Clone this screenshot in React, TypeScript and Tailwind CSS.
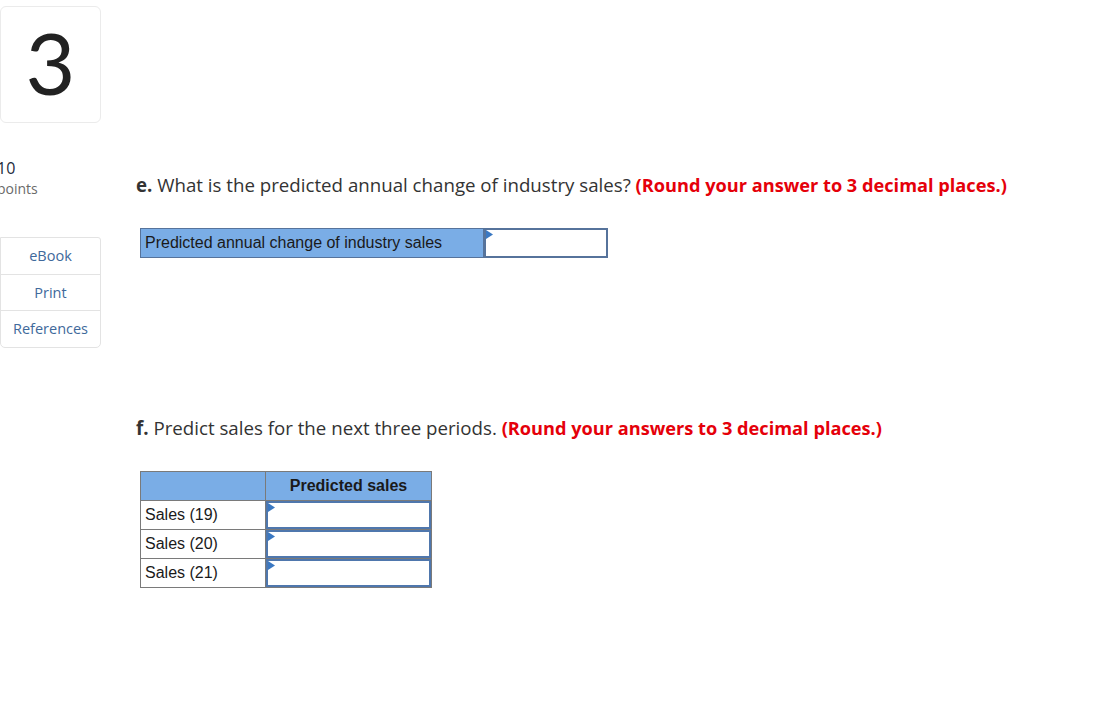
import type { ReactNode } from "react";

const sans = "font-['Open_Sans','Lato',sans-serif]";
const arial = "font-['Liberation_Sans',Arial,sans-serif]";

function Marker() {
  return (
    <svg
      className="absolute left-0 top-0"
      width="7"
      height="9"
      viewBox="0 0 7 9"
    >
      <polygon points="0,0 7,4.5 0,9" fill="#3a78c2" />
    </svg>
  );
}

function AnswerBox({ className }: { className: string }) {
  return (
    <div className={`relative border-2 bg-white ${className}`}>
      <Marker />
    </div>
  );
}

function SideButton({
  children,
  className = "",
}: {
  children: ReactNode;
  className?: string;
}) {
  return (
    <div
      className={`flex items-center justify-center border border-[#e3e3e3] text-[14.5px] text-[#40699b] ${className}`}
    >
      {children}
    </div>
  );
}

export default function App() {
  return (
    <div
      className={`flex h-[716px] w-[1110px] overflow-hidden bg-white ${sans}`}
    >
      {/* Sidebar */}
      <div className="flex w-[101px] shrink-0 flex-col">
        <div className="mt-[6px] flex h-[117px] w-[101px] items-center justify-center rounded-[6px] border border-[#ebebeb]">
          <span className="-mt-[6px] font-['Lato',sans-serif] text-[86px] font-normal leading-none text-[#222]">
            3
          </span>
        </div>
        <div className="-ml-[3px] mt-[35px] text-[16px] leading-[20px] text-[#1d2b3c]">
          10
        </div>
        <div className="-ml-[3px] mt-[2px] text-[14px] leading-[18px] text-[#6a6a6a]">
          points
        </div>
        <div className="mt-[39px] flex flex-col">
          <SideButton className="h-[38px] rounded-tr-[3px]">eBook</SideButton>
          <SideButton className="-mt-px h-[37px]">Print</SideButton>
          <SideButton className="-mt-px h-[38px] rounded-b-[5px]">
            References
          </SideButton>
        </div>
      </div>

      {/* Main */}
      <div className="flex flex-col pl-[35px]">
        <p className="mt-[173px] whitespace-nowrap text-[18.7px] leading-[24px] text-[#333]">
          <span className="font-bold">e.</span> What is the predicted annual
          change of industry sales?{" "}
          <span className="text-[18.2px] font-bold text-[#e5000a]">
            (Round your answer to 3 decimal places.)
          </span>
        </p>

        <div className={`ml-[4px] mt-[31px] flex h-[30px] ${arial}`}>
          <div className="flex w-[344px] items-center border border-[#56739b] bg-[#7aade6] pl-[4px] text-[16px] text-[#1a1a1a]">
            Predicted annual change of industry sales
          </div>
          <AnswerBox className="w-[124px] border-[#56739b]" />
        </div>

        <p className="mt-[158px] whitespace-nowrap text-[18.7px] leading-[24px] text-[#333]">
          <span className="font-bold">f.</span> Predict sales for the next three
          periods.{" "}
          <span className="text-[18.2px] font-bold text-[#e5000a]">
            (Round your answers to 3 decimal places.)
          </span>
        </p>

        <div className={`ml-[4px] mt-[31px] w-[292px] ${arial}`}>
          <div className="grid grid-cols-[125px_165px] border border-[#7a7a7a]">
            <div className="h-[28px] border-r border-[#7a7a7a] bg-[#7aade6]" />
            <div className="flex h-[28px] items-center justify-center bg-[#7aade6] text-[16px] font-bold text-[#1a1a1a]">
              Predicted sales
            </div>
            {["Sales (19)", "Sales (20)", "Sales (21)"].map((label) => (
              <div key={label} className="contents">
                <div className="flex h-[29px] items-center border-r border-t border-[#7a7a7a] pl-[4px] text-[16px] text-[#1a1a1a]">
                  {label}
                </div>
                <div className="h-[29px] border-t border-[#7a7a7a]">
                  <AnswerBox className="h-full w-full border-[#4f77ad]" />
                </div>
              </div>
            ))}
          </div>
        </div>
      </div>
    </div>
  );
}
